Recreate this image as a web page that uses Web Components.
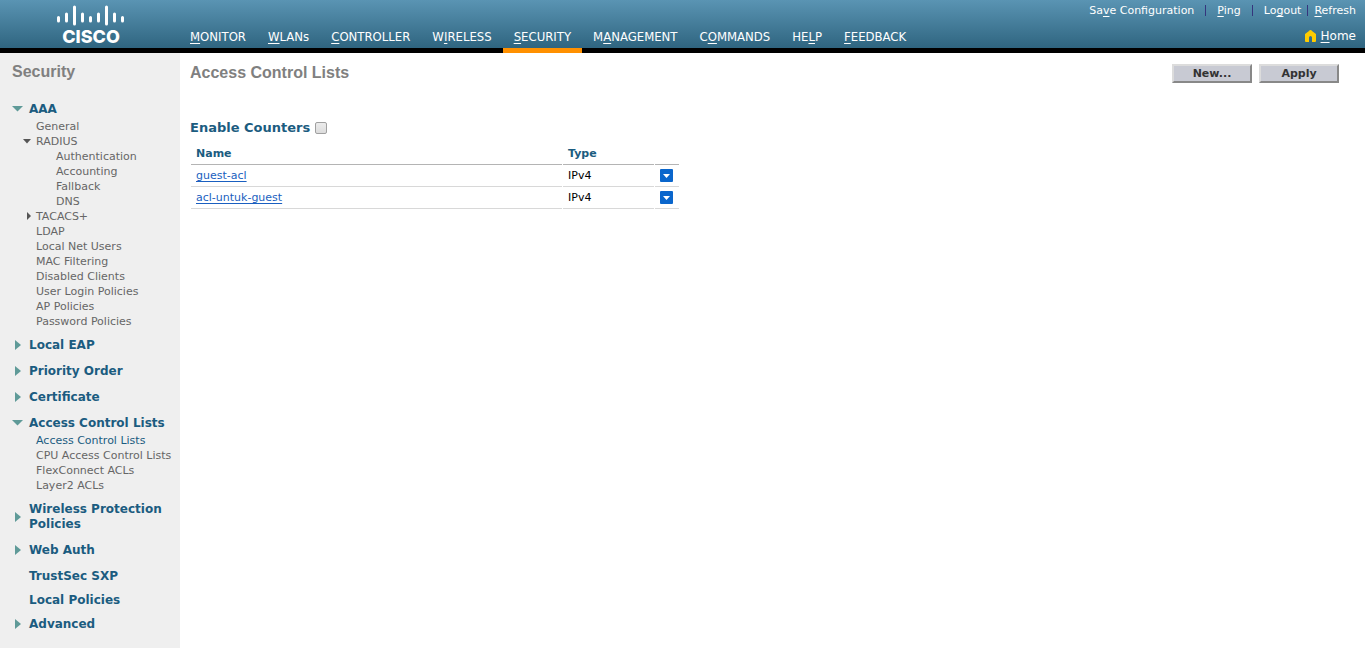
<!DOCTYPE html>
<html lang="en">
<head>
<meta charset="utf-8">
<title>Access Control Lists</title>
<style>
  body {
    margin: 0;
    min-height: 100vh;
    display: flex;
    flex-direction: column;
    font: 11px/15px "DejaVu Sans", sans-serif;
    background: #fff;
  }

  .columns {
    flex: 1;
    display: flex;
  }
</style>
</head>
<body>
<wlc-header>
  <nav-tab href="#monitor"><u>M</u>ONITOR</nav-tab>
  <nav-tab href="#wlans"><u>W</u>LANs</nav-tab>
  <nav-tab href="#controller"><u>C</u>ONTROLLER</nav-tab>
  <nav-tab href="#wireless">W<u>I</u>RELESS</nav-tab>
  <nav-tab href="#security" active><u>S</u>ECURITY</nav-tab>
  <nav-tab href="#management">M<u>A</u>NAGEMENT</nav-tab>
  <nav-tab href="#commands">C<u>O</u>MMANDS</nav-tab>
  <nav-tab href="#help">HE<u>L</u>P</nav-tab>
  <nav-tab href="#feedback"><u>F</u>EEDBACK</nav-tab>
</wlc-header>
<div class="columns">
  <side-menu heading="Security"></side-menu>
  <content-page heading="Access Control Lists">
    <push-button slot="actions">New...</push-button>
    <push-button slot="actions">Apply</push-button>
    <counter-toggle></counter-toggle>
    <acl-table></acl-table>
  </content-page>
</div>

<script>
const menu = [
  {
    label: "AAA",
    open: true,
    items: [
      { label: "General" },
      { label: "RADIUS", open: true, items: ["Authentication", "Accounting", "Fallback", "DNS"] },
      { label: "TACACS+", items: [] },
      { label: "LDAP" },
      { label: "Local Net Users" },
      { label: "MAC Filtering" },
      { label: "Disabled Clients" },
      { label: "User Login Policies" },
      { label: "AP Policies" },
      { label: "Password Policies" },
    ],
  },
  { label: "Local EAP" },
  { label: "Priority Order" },
  { label: "Certificate" },
  {
    label: "Access Control Lists",
    open: true,
    items: [
      { label: "Access Control Lists", current: true },
      { label: "CPU Access Control Lists" },
      { label: "FlexConnect ACLs" },
      { label: "Layer2 ACLs" },
    ],
  },
  { label: "Wireless Protection Policies" },
  { label: "Web Auth" },
  { label: "TrustSec SXP", leaf: true },
  { label: "Local Policies", leaf: true },
  { label: "Advanced" },
];

const acls = [
  { name: "guest-acl", type: "IPv4" },
  { name: "acl-untuk-guest", type: "IPv4" },
];

class WlcHeader extends HTMLElement {
  constructor() {
    super();
    this.attachShadow({ mode: "open" });
  }

  static get styles() {
    return /* css */ `
      :host {
        display: flex;
        height: 48px;
        color: #fff;
        background: linear-gradient(#5a94b3, #2f6580);
        border-bottom: 5px solid #000;
      }

      .logo {
        width: 179px;
        flex: none;
      }

      nav {
        flex: 1;
        display: flex;
        align-items: flex-end;
      }

      .tools {
        display: flex;
        flex-direction: column;
        justify-content: space-between;
        align-items: flex-end;
        padding: 3px 9px 4px 0;
      }

      .links {
        display: flex;
        gap: 11px;
      }

      .links i {
        width: 1px;
        height: 11px;
        margin-top: 2px;
        background: #35357d;
      }

      .tight {
        display: flex;
        gap: 6px;
      }

      a {
        color: inherit;
        text-decoration: none;
        white-space: nowrap;
      }

      u {
        text-decoration-skip-ink: none;
        text-underline-offset: 2px;
      }

      .home {
        display: flex;
        align-items: center;
        gap: 5px;
        font-size: 12px;
      }
    `;
  }

  connectedCallback() {
    this.shadowRoot.innerHTML = /* html */ `
      <style>${WlcHeader.styles}</style>
      <svg class="logo" height="48" viewBox="0 0 179 48" role="img" aria-label="Cisco">
        <g stroke="#fff" stroke-width="3" stroke-linecap="round">
          <path d="M58.500 17.500v3.500M66.500 14v7M74.500 7v17M82.500 14v7M90.500 17.500v3.500M98.500 14v7M106.500 7v17M114.500 14v7M122.500 17.500v3.500"/>
        </g>
        <text x="91" y="43" text-anchor="middle" fill="#fff" font-family="Inter, sans-serif" font-size="18" font-weight="800">CISCO</text>
      </svg>
      <nav><slot></slot></nav>
      <div class="tools">
        <div class="links">
          <a href="#save">Sa<u>v</u>e Configuration</a><i></i>
          <a href="#ping"><u>P</u>ing</a><i></i>
          <div class="tight">
            <a href="#logout">Lo<u>g</u>out</a><i></i>
            <a href="#refresh"><u>R</u>efresh</a>
          </div>
        </div>
        <a class="home" href="#home">
          <svg width="11" height="15" viewBox="0 0 11 15"><path fill="#fc0" d="M5.500 1q1 0 1.500 1l4 3v7q0 1-1 1H7V8.500q0-1.500-1.500-1.500T4 8.500V13H1q-1 0-1-1V5l4-3q.5-1 1.500-1z"/></svg>
          <span><u>H</u>ome</span>
        </a>
      </div>
    `;
  }
}

class NavTab extends HTMLElement {
  constructor() {
    super();
    this.attachShadow({ mode: "open" });
  }

  static get styles() {
    return /* css */ `
      :host {
        display: block;
        font: 13px/16px "DejaVu Sans Condensed", "DejaVu Sans", sans-serif;
      }

      a {
        display: block;
        margin-bottom: -5px;
        padding: 0 11px 3px;
        border-bottom: 5px solid transparent;
        color: #fff;
        text-decoration: none;
      }

      :host([active]) a {
        border-color: #ff9000;
      }

      ::slotted(u) {
        text-decoration-skip-ink: none;
        text-underline-offset: 2px;
      }
    `;
  }

  connectedCallback() {
    this.shadowRoot.innerHTML = /* html */ `
      <style>${NavTab.styles}</style>
      <a href="${this.getAttribute("href")}"><slot></slot></a>
    `;
  }
}

class SideMenu extends HTMLElement {
  constructor() {
    super();
    this.attachShadow({ mode: "open" });
  }

  static get styles() {
    return /* css */ `
      :host {
        display: block;
        box-sizing: border-box;
        width: 180px;
        flex: none;
        background: #efefef;
        color: #666;
      }

      h2 {
        margin: 0;
        padding: 9px 12px 20px;
        font: bold 16px/20px "Liberation Sans", sans-serif;
        color: #808080;
      }

      ul {
        list-style: none;
        margin: 0;
        padding: 0;
      }

      a {
        color: inherit;
        text-decoration: none;
      }

      .group {
        padding-bottom: 11px;
      }

      .group.leaf,
      .group.open {
        padding-bottom: 9px;
      }

      .title {
        display: flex;
        align-items: center;
        padding-left: 12px;
        font-size: 12px;
        font-weight: bold;
        color: #1b5c80;
      }

      .title svg {
        flex: none;
        width: 12px;
        margin-right: 5px;
        fill: #5f9a98;
      }

      .items {
        padding: 2px 0 0 22px;
        white-space: nowrap;
      }

      .items .row {
        display: flex;
        align-items: center;
      }

      .items svg {
        width: 14px;
        fill: #555;
      }

      .row.plain {
        padding-left: 14px;
      }

      .items ul {
        padding-left: 34px;
      }

      .current {
        color: #1b5c80;
      }
    `;
  }

  arrow(open) {
    const path = open ? "M0 2h11L5.500 7.500z" : "M3 0 9 5 3 10z";
    return `<svg width="12" height="11" viewBox="0 0 12 11"><path d="${path}"/></svg>`;
  }

  smallArrow(open) {
    const path = open ? "M1 3h8L5 7.500z" : "M5 1 9 5 5 9z";
    return `<svg width="14" height="11" viewBox="0 0 14 11"><path d="${path}"/></svg>`;
  }

  item(data) {
    if (!data.items) {
      return `<li class="row plain ${data.current ? "current" : ""}"><a href="#">${data.label}</a></li>`;
    }

    const children = data.items.map((label) => `<li><a href="#">${label}</a></li>`).join("");
    return `
      <li>
        <div class="row">${this.smallArrow(data.open)}<a href="#">${data.label}</a></div>
        <ul>${children}</ul>
      </li>`;
  }

  group(data) {
    const state = data.open ? "open" : data.leaf ? "leaf" : "";
    const icon = data.leaf ? "<svg height='11'></svg>" : this.arrow(data.open);
    const items = data.items ? `<ul class="items">${data.items.map((i) => this.item(i)).join("")}</ul>` : "";
    return `
      <li class="group ${state}">
        <div class="title">${icon}<a href="#">${data.label}</a></div>
        ${items}
      </li>`;
  }

  connectedCallback() {
    this.shadowRoot.innerHTML = /* html */ `
      <style>${SideMenu.styles}</style>
      <h2>${this.getAttribute("heading")}</h2>
      <nav><ul>${menu.map((g) => this.group(g)).join("")}</ul></nav>
    `;
  }
}

class ContentPage extends HTMLElement {
  constructor() {
    super();
    this.attachShadow({ mode: "open" });
  }

  static get styles() {
    return /* css */ `
      :host {
        display: block;
        flex: 1;
        padding: 10px 26px 0 10px;
      }

      header {
        display: flex;
        justify-content: space-between;
        align-items: center;
        margin-bottom: 37px;
      }

      h1 {
        margin: 0;
        font: bold 16px/20px "Liberation Sans", sans-serif;
        color: #808080;
      }

      .actions {
        display: flex;
        gap: 7px;
      }
    `;
  }

  connectedCallback() {
    this.shadowRoot.innerHTML = /* html */ `
      <style>${ContentPage.styles}</style>
      <header>
        <h1>${this.getAttribute("heading")}</h1>
        <div class="actions"><slot name="actions"></slot></div>
      </header>
      <slot></slot>
    `;
  }
}

class PushButton extends HTMLElement {
  constructor() {
    super();
    this.attachShadow({ mode: "open" });
  }

  static get styles() {
    return /* css */ `
      :host {
        display: block;
      }

      button {
        display: block;
        min-width: 80px;
        padding: 0 8px;
        border: 2px solid;
        border-color: #dcdcdc #888 #888 #dcdcdc;
        background: #c8cad3;
        color: #333;
        font: bold 11px/15px "DejaVu Sans", sans-serif;
      }
    `;
  }

  connectedCallback() {
    this.shadowRoot.innerHTML = /* html */ `
      <style>${PushButton.styles}</style>
      <button type="button"><slot></slot></button>
    `;
  }
}

class CounterToggle extends HTMLElement {
  constructor() {
    super();
    this.attachShadow({ mode: "open" });
  }

  static get styles() {
    return /* css */ `
      :host {
        display: flex;
        align-items: center;
        gap: 5px;
        margin-bottom: 7px;
        font-size: 13px;
        line-height: 16px;
        font-weight: bold;
        color: #1b5c80;
      }

      input {
        appearance: none;
        width: 12px;
        height: 12px;
        margin: 0;
        border: 1px solid #a0a0a0;
        border-radius: 2px;
        background: linear-gradient(#ececec, #dcdcdc);
      }

      input:checked {
        background: #1b5c80;
      }
    `;
  }

  connectedCallback() {
    this.shadowRoot.innerHTML = /* html */ `
      <style>${CounterToggle.styles}</style>
      <label for="counters">Enable Counters</label>
      <input type="checkbox" id="counters">
    `;
  }
}

class AclTable extends HTMLElement {
  constructor() {
    super();
    this.attachShadow({ mode: "open" });
  }

  static get styles() {
    return /* css */ `
      :host {
        display: block;
      }

      table {
        width: 490px;
        max-width: 100%;
        table-layout: fixed;
        border-spacing: 1px 0;
      }

      th, td {
        height: 21px;
        padding: 0 0 0 5px;
        border-bottom: 1px solid #d8d8d8;
        text-align: left;
        color: #000;
      }

      th {
        border-color: #b4b4b4;
        color: #1b5c80;
      }

      .type {
        width: 86px;
      }

      .menu {
        width: 19px;
      }

      a {
        color: #1a5fc0;
        text-decoration-skip-ink: none;
        text-underline-offset: 2px;
      }

      button {
        display: block;
        width: 13px;
        height: 13px;
        padding: 0;
        border: 0;
        border-radius: 1px;
        background: #0a66cc;
      }

      svg {
        display: block;
      }
    `;
  }

  row(acl) {
    return `
      <tr>
        <td><a href="#${acl.name}">${acl.name}</a></td>
        <td>${acl.type}</td>
        <td>
          <button type="button" aria-label="Actions for ${acl.name}">
            <svg width="13" height="13" viewBox="0 0 13 13"><path fill="#fff" d="M3 5h7L6.500 9z"/></svg>
          </button>
        </td>
      </tr>`;
  }

  connectedCallback() {
    this.shadowRoot.innerHTML = /* html */ `
      <style>${AclTable.styles}</style>
      <table>
        <thead>
          <tr><th>Name</th><th class="type">Type</th><th class="menu"></th></tr>
        </thead>
        <tbody>${acls.map((acl) => this.row(acl)).join("")}</tbody>
      </table>
    `;
  }
}

customElements.define("wlc-header", WlcHeader);
customElements.define("nav-tab", NavTab);
customElements.define("side-menu", SideMenu);
customElements.define("content-page", ContentPage);
customElements.define("push-button", PushButton);
customElements.define("counter-toggle", CounterToggle);
customElements.define("acl-table", AclTable);
</script>
</body>
</html>
